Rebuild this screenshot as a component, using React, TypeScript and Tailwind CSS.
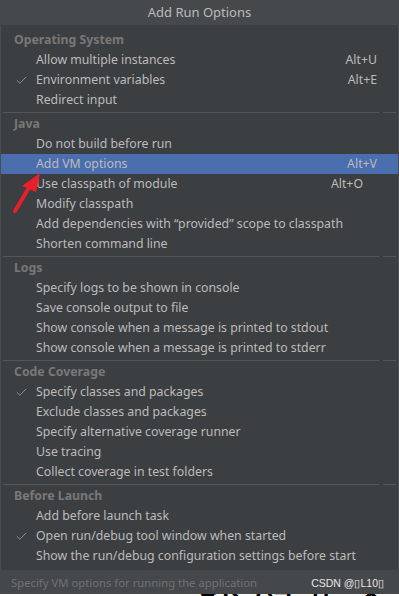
import { Check } from 'lucide-react'

type Item = { label: string; checked?: boolean; shortcut?: string; selected?: boolean; shortcutPad?: string }

const SECTIONS: { title: string; items: Item[] }[] = [
  {
    title: 'Operating System',
    items: [
      { label: 'Allow multiple instances', shortcut: 'Alt+U' },
      { label: 'Environment variables', shortcut: 'Alt+E', checked: true },
      { label: 'Redirect input' },
    ],
  },
  {
    title: 'Java',
    items: [
      { label: 'Do not build before run' },
      { label: 'Add VM options', shortcut: 'Alt+V', selected: true },
      { label: 'Use classpath of module', shortcut: 'Alt+O', shortcutPad: 'pr-[35px]' },
      { label: 'Modify classpath' },
      { label: 'Add dependencies with \u201cprovided\u201d scope to classpath' },
      { label: 'Shorten command line' },
    ],
  },
  {
    title: 'Logs',
    items: [
      { label: 'Specify logs to be shown in console' },
      { label: 'Save console output to file' },
      { label: 'Show console when a message is printed to stdout' },
      { label: 'Show console when a message is printed to stderr' },
    ],
  },
  {
    title: 'Code Coverage',
    items: [
      { label: 'Specify classes and packages', checked: true },
      { label: 'Exclude classes and packages' },
      { label: 'Specify alternative coverage runner' },
      { label: 'Use tracing' },
      { label: 'Collect coverage in test folders' },
    ],
  },
  {
    title: 'Before Launch',
    items: [
      { label: 'Add before launch task' },
      { label: 'Open run/debug tool window when started', checked: true },
      { label: 'Show the run/debug configuration settings before start' },
    ],
  },
]

function Separator() {
  return (
    <div className="flex gap-[4px] pt-[2px] pb-[1px] pl-[2px] pr-[2px]">
      <div className="h-px flex-1 bg-[#515658]" />
      <div className="h-px w-[13px] bg-[#515658]" />
    </div>
  )
}

function Row({ item }: { item: Item }) {
  return (
    <div className={`flex h-[20px] items-center ${item.selected ? 'bg-[#4b6eaf]' : ''}`}>
      <div className="flex w-[35px] shrink-0 items-center pl-[14px]">
        {item.checked && <Check size={13} strokeWidth={1.3} className="text-[#b0b0b0]" />}
      </div>
      <span className="flex-1 text-[#bbbbbb]">{item.label}</span>
      {item.shortcut && <span className={`text-[#bbbbbb] ${item.shortcutPad ?? 'pr-[21px]'}`}>{item.shortcut}</span>}
    </div>
  )
}

export default function App() {
  return (
    <div className="relative h-[596px] w-[399px] overflow-hidden bg-[#3c3f41] text-[12.3px]" style={{ fontFamily: '"Noto Sans", "Open Sans", sans-serif' }}>
      {/* Titel */}
      <div className="flex h-[25px] items-center justify-center bg-[#45494b] text-[13px] text-[#bbbbbb]">Add Run Options</div>

      <div className="border-x border-[#4a4d50] pt-[5px] pb-[4px]">
        {SECTIONS.map((section, i) => (
          <div key={section.title}>
            {i > 0 && <Separator />}
            <div className="flex h-[20px] items-center pl-[13px] font-bold text-[#787878]">{section.title}</div>
            {section.items.map((item) => (
              <Row key={item.label} item={item} />
            ))}
          </div>
        ))}
      </div>

      {/* Fußzeile */}
      <div className="flex h-[24px] items-center justify-between bg-[#45484a] pt-[3px] pl-[11px] pr-[15px]">
        <span className="text-[11.3px] text-[#6f7173]">Specify VM options for running the application</span>
        <span className="text-[10.5px] text-[#e6e6e6]" style={{ fontFamily: '"Liberation Sans", Arial, sans-serif' }}>CSDN @▯L10▯</span>
      </div>

      {/* abgeschnittener Text darunter */}
      <div className="relative h-[3px] overflow-hidden bg-white">
        <div className="absolute left-[198px] top-[-9px] whitespace-nowrap text-[46px] leading-none tracking-[4px] text-black" style={{ fontFamily: '"Noto Sans CJK SC", sans-serif' }}>我们要会的，表</div>
      </div>

      {/* roter Pfeil */}
      <svg className="absolute left-0 top-0" width="399" height="596" viewBox="0 0 399 596">
        <line x1="15" y1="211" x2="30" y2="186" stroke="#e8202a" strokeWidth="4" strokeLinecap="round" />
        <polygon points="40,173 22,186 36,192" fill="#e8202a" />
      </svg>
    </div>
  )
}
